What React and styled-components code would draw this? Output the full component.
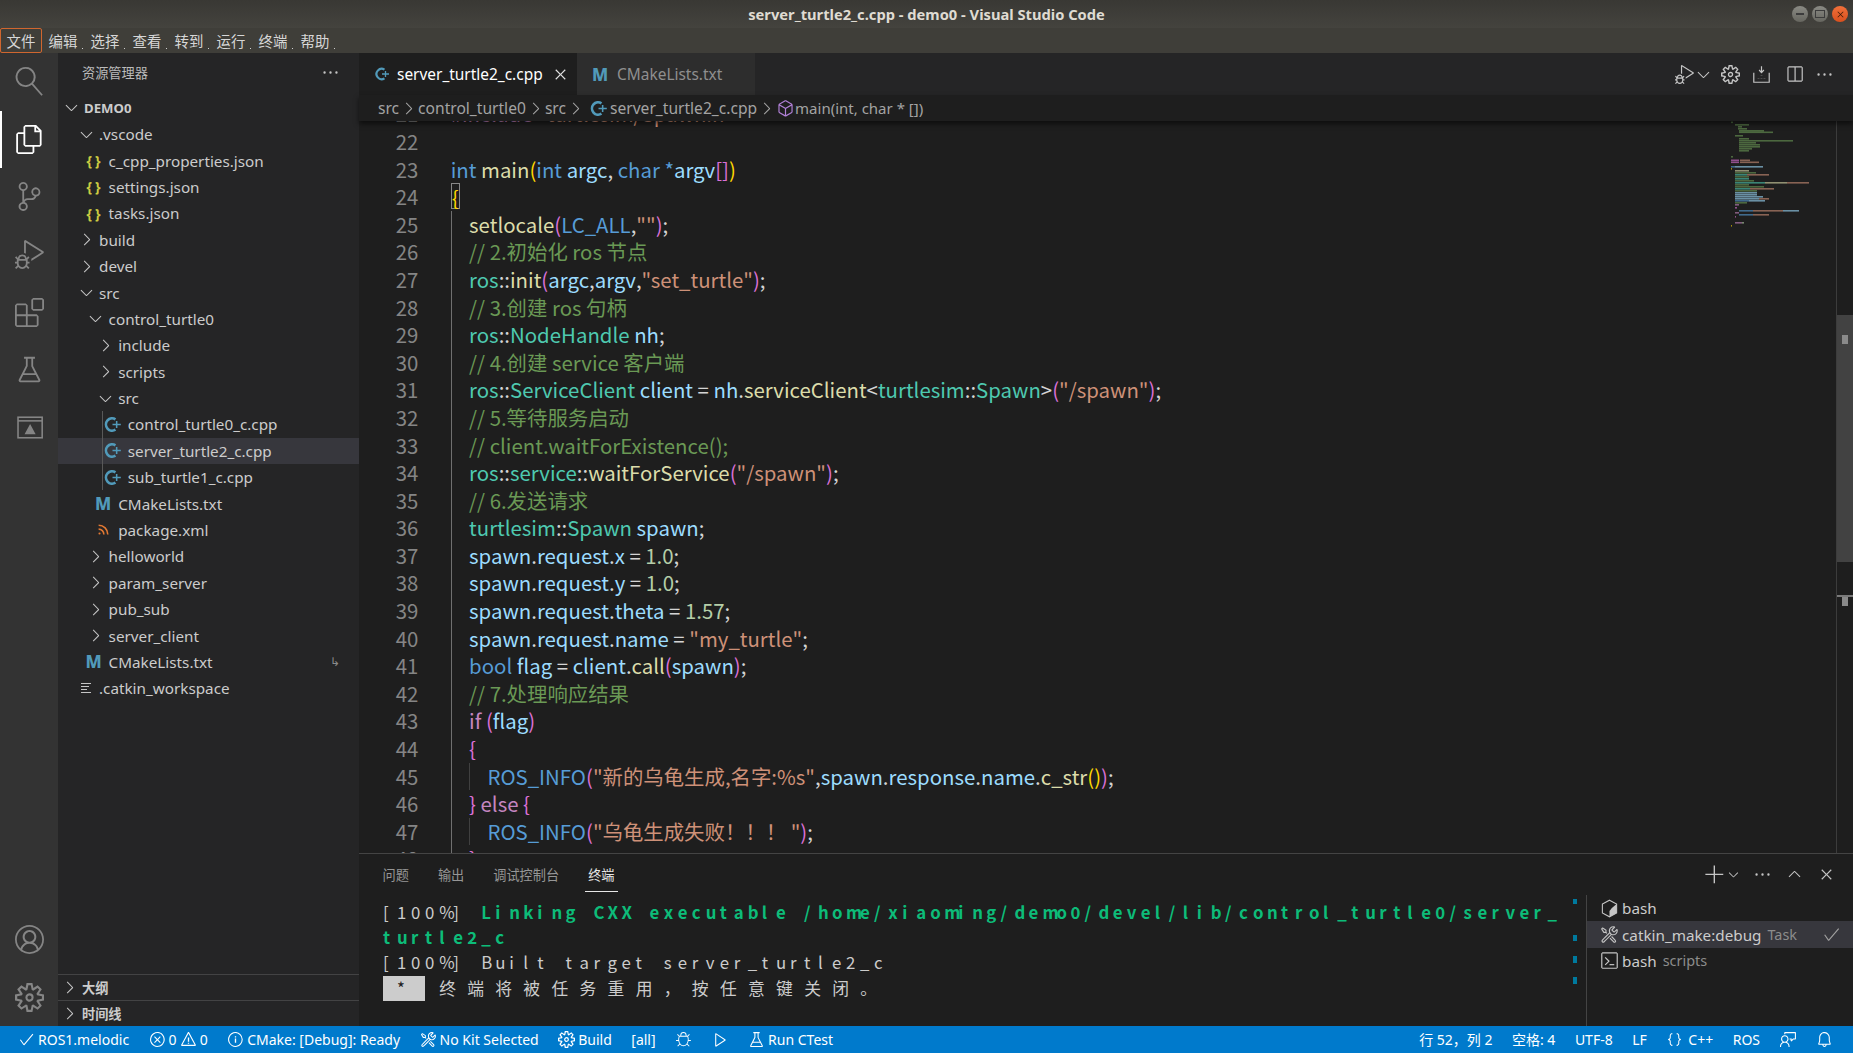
import styled, { createGlobalStyle } from 'styled-components';
import {
  VscSearch, VscFiles, VscSourceControl, VscDebugAlt, VscExtensions, VscBeaker, VscAccount,
  VscSettingsGear, VscEllipsis, VscChevronRight, VscChevronDown, VscChevronUp, VscClose,
  VscSplitHorizontal, VscSymbolMethod, VscTools, VscCheck, VscBell, VscFeedback, VscError,
  VscWarning, VscInfo, VscBug, VscPlay, VscAdd, VscTerminal, VscJson,
} from 'react-icons/vsc';

const UI = `'Noto Sans', 'Noto Sans CJK SC', sans-serif`;
const CODE = `'Noto Sans CJK SC', sans-serif`;

const Global = createGlobalStyle`
  html, body { margin: 0; height: 100%; overflow: hidden; background: #1e1e1e; }
  #root { height: 100%; }
`;

const Window = styled.div`
  height: 1053px;
  display: flex;
  flex-direction: column;
  font-family: ${UI};
  color: #cccccc;
`;

const TitleBar = styled.div`
  height: 28px;
  flex: none;
  box-sizing: border-box;
  padding-bottom: 1px;
  display: flex;
  align-items: center;
  justify-content: center;
  position: relative;
  background: linear-gradient(#393834, #44433e);
  color: #dfdbd2;
  font-size: 14.7px;
  font-weight: 700;
`;

const WinControls = styled.div`
  position: absolute;
  right: 5px;
  top: 6px;
  display: flex;
  gap: 4px;
`;

const WinButton = styled.div`
  width: 16px;
  height: 16px;
  border-radius: 50%;
  display: flex;
  align-items: center;
  justify-content: center;
  color: ${(p) => (p.$close ? '#3a1a08' : '#3c3c3c')};
  background: ${(p) =>
    p.$close ? 'linear-gradient(#f0703a, #d9501e)' : 'linear-gradient(#8a8a84, #66665f)'};
  svg { width: 11px; height: 11px; }
`;

const MinGlyph = styled.span`
  width: 8px;
  height: 2px;
  background: #3c3c3c;
`;

const MaxGlyph = styled.span`
  width: 8px;
  height: 6px;
  border: 1px solid #3c3c3c;
`;

const MenuBar = styled.div`
  height: 25px;
  flex: none;
  display: flex;
  background: #3f3e39;
  font-size: 14.4px;
`;

const MenuItem = styled.div`
  width: 42px;
  box-sizing: border-box;
  display: flex;
  align-items: center;
  justify-content: center;
  position: relative;
  color: #d6d6d6;
  border: 1px solid ${(p) => (p.$open ? '#d0662f' : 'transparent')};
  border-radius: 2px;
  &::after {
    content: '';
    display: ${(p) => (p.$open ? 'none' : 'block')};
    position: absolute;
    right: 0;
    bottom: 3px;
    width: 1px;
    height: 1px;
    background: #cfcfcf;
  }
`;

const Main = styled.div`
  flex: 1;
  min-height: 0;
  display: flex;
`;

const ActivityBar = styled.div`
  width: 58px;
  flex: none;
  display: flex;
  flex-direction: column;
  background: #333333;
`;

const ActivityGroup = styled.div`
  flex: ${(p) => (p.$grow ? 1 : 'none')};
  display: flex;
  flex-direction: column;
`;

const ActivityItem = styled.div`
  height: 57.6px;
  display: flex;
  align-items: center;
  justify-content: center;
  color: ${(p) => (p.$active ? '#ffffff' : '#858585')};
  border-left: 2px solid ${(p) => (p.$active ? '#ffffff' : 'transparent')};
  box-sizing: border-box;
  padding-right: 2px;
  svg { width: 29px; height: 29px; }
`;

const SideBar = styled.div`
  width: 301px;
  flex: none;
  display: flex;
  flex-direction: column;
  background: #252526;
  font-size: 15.25px;
`;

const SideHeader = styled.div`
  height: 41.6px;
  flex: none;
  box-sizing: border-box;
  padding: 0 19px 2px 24px;
  display: flex;
  align-items: center;
  justify-content: space-between;
  font-size: 13.2px;
  color: #bbbbbb;
  svg { width: 19px; height: 19px; color: #c5c5c5; }
`;

const Tree = styled.div`
  flex: 1;
`;

const Row = styled.div`
  height: 26.4px;
  display: flex;
  align-items: center;
  box-sizing: border-box;
  padding-left: ${(p) => 31.4 + p.$depth * 9.6 - (p.$wide ? 30 : 26)}px;
  background: ${(p) => (p.$selected ? '#37373d' : 'transparent')};
  color: #cccccc;
  white-space: nowrap;
`;

const RootRow = styled(Row)`
  font-size: 13.2px;
  font-weight: 700;
  color: #cccccc;
`;

const Slot = styled.span`
  width: ${(p) => (p.$wide ? 30 : 26)}px;
  flex: none;
  display: flex;
  align-items: center;
  justify-content: center;
  color: ${(p) => p.$color || '#c5c5c5'};
  svg { width: 19px; height: 19px; }
`;

const Trailing = styled.span`
  margin-left: auto;
  padding-right: 19px;
  font-size: 12px;
  color: #8a8a8a;
`;

const GuidedGroup = styled.div`
  position: relative;
  &::before {
    content: '';
    position: absolute;
    left: 43.5px;
    top: 0;
    bottom: 0;
    width: 1px;
    background: #585858;
    z-index: 1;
  }
`;

const BraceIcon = styled.span`
  font-size: 14px;
  font-weight: 700;
  color: #cbcb41;
  letter-spacing: 3px;
  margin-right: -3px;
`;

const MIcon = styled.span`
  font-size: 17px;
  font-weight: 800;
  color: #519aba;
`;

const LinesIcon = styled.span`
  display: flex;
  flex-direction: column;
  gap: 2px;
  width: 10px;
  i { display: block; height: 1px; background: #c5c5c5; }
  i:nth-child(2) { width: 8px; }
  i:nth-child(3) { width: 6px; }
`;

const SideSection = styled.div`
  height: 26px;
  flex: none;
  display: flex;
  align-items: center;
  box-sizing: border-box;
  border-top: 1px solid #434344;
  font-size: 13.2px;
  font-weight: 700;
  color: #cccccc;
  padding-left: 1.5px;
  gap: 3.5px;
  svg { width: 19px; height: 19px; color: #c5c5c5; }
`;

const Work = styled.div`
  flex: 1;
  min-width: 0;
  display: flex;
  flex-direction: column;
`;

const TabBar = styled.div`
  height: 42px;
  flex: none;
  display: flex;
  align-items: stretch;
  background: #252526;
`;

const Tab = styled.div`
  width: ${(p) => p.$w}px;
  box-sizing: border-box;
  display: flex;
  align-items: center;
  padding-left: 15px;
  font-size: 15.45px;
  background: ${(p) => (p.$active ? '#1e1e1e' : '#2d2d2d')};
  color: ${(p) => (p.$active ? '#ffffff' : '#8f8f8f')};
`;

const TabIcon = styled.span`
  width: ${(p) => p.$w}px;
  flex: none;
  display: flex;
  align-items: center;
`;

const TabClose = styled.span`
  margin-left: 8px;
  display: flex;
  svg { width: 19px; height: 19px; color: #e0e0e0; }
`;

const TabActions = styled.div`
  margin-left: auto;
  display: flex;
  align-items: center;
  padding-right: 19px;
  color: #c5c5c5;
  svg { width: 19px; height: 19px; }
`;

const ActionBtn = styled.span`
  display: flex;
  margin-left: ${(p) => p.$gap ?? 12}px;
`;

const Breadcrumb = styled.div`
  height: 26.4px;
  flex: none;
  display: flex;
  align-items: center;
  padding-left: 19px;
  font-size: 15.6px;
  color: #a3a3a3;
  background: #1e1e1e;
  position: relative;
  z-index: 2;
  box-shadow: 0 3px 5px rgba(0, 0, 0, 0.55);
  svg { width: 19px; height: 19px; }
`;

const CrumbSep = styled.span`
  display: flex;
  color: #a3a3a3;
`;

const CrumbIcon = styled.span`
  display: flex;
  margin: 0 ${(p) => p.$after}px 0 ${(p) => p.$before}px;
  color: ${(p) => p.$color};
`;

const CrumbSymbol = styled.span`
  font-size: 15px;
`;

const EditorBody = styled.div`
  flex: 1;
  min-height: 0;
  display: flex;
  background: #1e1e1e;
`;

const Code = styled.div`
  flex: 1;
  min-width: 0;
  overflow: hidden;
  font-family: ${CODE};
  font-size: 20.4px;
  color: #d4d4d4;
`;

const CodeScroll = styled.div`
  margin-top: -21px;
`;

const CodeLine = styled.div`
  height: 27.6px;
  line-height: 27.6px;
  display: flex;
  white-space: pre;
`;

const LineNo = styled.span`
  width: 59.3px;
  padding-right: 32.4px;
  flex: none;
  text-align: right;
  color: #858585;
`;

const Indent = styled.span`
  width: 18.4px;
  flex: none;
  box-sizing: border-box;
  border-left: 1px solid ${(p) => (p.$active ? '#707070' : '#404040')};
`;

const Tok = styled.span`
  color: ${(p) => p.$c};
`;

const MatchedBracket = styled(Tok)`
  box-sizing: border-box;
  height: 26px;
  line-height: 26px;
  border: 1px solid #888888;
`;

const MinimapBox = styled.div`
  width: 110px;
  flex: none;
  svg { display: block; margin-top: -1px; }
`;

const Ruler = styled.div`
  width: 17px;
  flex: none;
  box-sizing: border-box;
  position: relative;
  border-left: 1px solid #3c3c3c;
`;

const RulerSlider = styled.div`
  position: absolute;
  left: 0;
  right: 0;
  top: 194px;
  height: 247px;
  background: #424242;
`;

const RulerMark = styled.div`
  position: absolute;
  left: 5px;
  width: 6px;
  height: 9px;
  top: ${(p) => p.$top}px;
  background: #8a8a8a;
`;

const RulerLine = styled.div`
  position: absolute;
  left: 0;
  right: 0;
  top: 474px;
  height: 2px;
  background: #7a7a7a;
`;

const Panel = styled.div`
  height: 173px;
  flex: none;
  box-sizing: border-box;
  display: flex;
  flex-direction: column;
  border-top: 1px solid #444444;
  background: #1e1e1e;
`;

const PanelHeader = styled.div`
  height: 41px;
  flex: none;
  display: flex;
  align-items: stretch;
  padding-left: 20.5px;
  font-size: 13.2px;
`;

const PanelTab = styled.div`
  display: flex;
  align-items: center;
  padding: 0 3px 1px;
  margin-right: 23px;
  color: ${(p) => (p.$active ? '#e7e7e7' : '#969696')};
  position: relative;
  &::after {
    content: '';
    display: ${(p) => (p.$active ? 'block' : 'none')};
    position: absolute;
    left: 0;
    right: 0;
    bottom: 3px;
    height: 1px;
    background: #e7e7e7;
  }
`;

const PanelActions = styled.div`
  margin-left: auto;
  display: flex;
  align-items: center;
  padding-right: 17px;
  color: #c5c5c5;
  svg { width: 19px; height: 19px; }
`;

const PlusIcon = styled.span`
  display: flex;
  svg { width: 22px; height: 22px; }
`;

const SmallChevron = styled.span`
  display: flex;
  margin: 0 6px 0 0;
  svg { width: 15px; height: 15px; }
`;

const PanelBody = styled.div`
  flex: 1;
  min-height: 0;
  display: flex;
`;

const Terminal = styled.div`
  flex: 1;
  min-width: 0;
  box-sizing: border-box;
  padding: 5px 0 0 24px;
  position: relative;
  font-family: ${CODE};
  font-size: 16.8px;
  color: #cccccc;
`;

const TermRow = styled.div`
  height: 25.2px;
  line-height: 25.2px;
  display: flex;
  white-space: pre;
`;

const Cell = styled.span`
  width: ${(p) => (p.$wide ? 28.08 : 14.04)}px;
  flex: none;
  color: ${(p) => p.$c || 'inherit'};
  font-weight: ${(p) => (p.$bold ? 700 : 400)};
  background: ${(p) => p.$bg || 'transparent'};
`;

const Decoration = styled.div`
  position: absolute;
  right: 9px;
  width: 4px;
  height: ${(p) => p.$h}px;
  top: ${(p) => p.$top}px;
  background: #007a9e;
`;

const TermList = styled.div`
  width: 266px;
  flex: none;
  border-left: 1px solid #444444;
  font-size: 15.25px;
`;

const TermItem = styled.div`
  height: 26.4px;
  display: flex;
  align-items: center;
  padding-left: 13px;
  background: ${(p) => (p.$selected ? '#37373d' : 'transparent')};
  color: #cccccc;
  svg { width: 19px; height: 19px; flex: none; }
`;

const TermItemIcon = styled.span`
  display: flex;
  width: 22px;
  color: #c5c5c5;
`;

const TermHint = styled.span`
  margin-left: 6px;
  font-size: 14.4px;
  color: #8c8c8c;
`;

const TermCheck = styled.span`
  margin-left: auto;
  padding-right: 12px;
  display: flex;
  svg { width: 19px; height: 19px; color: #a0a0a0; }
`;

const StatusBar = styled.div`
  height: 27px;
  flex: none;
  box-sizing: border-box;
  display: flex;
  align-items: center;
  padding: 0 20px 1px 18px;
  gap: 19.5px;
  background: #007acc;
  color: #ffffff;
  font-size: 14px;
  svg { width: 17px; height: 17px; flex: none; }
`;

const StatusItem = styled.span`
  display: flex;
  align-items: center;
  gap: ${(p) => p.$gap ?? 3}px;
  white-space: nowrap;
  margin-left: ${(p) => (p.$push ? 'auto' : 0)};
`;

const CppIcon = ({ size = 16 }) => (
  <svg width={size} height={size} viewBox="0 0 16 16" fill="none" stroke="#519aba" strokeWidth="2.2">
    <path d="M10.5 3.6A5.2 5.2 0 1 0 10.5 12.4" />
    <path d="M8 8h7M11.5 5v6" strokeWidth="1.3" />
  </svg>
);

const RemoteIcon = () => (
  <svg viewBox="0 0 24 24" fill="none" stroke="currentColor" strokeWidth="1.3">
    <rect x="2.5" y="3.5" width="20" height="17" />
    <path d="M2.5 6.5h20" />
    <path d="M12.5 10.5l3.5 6.5h-7z" fill="currentColor" />
  </svg>
);

const InstallIcon = () => (
  <svg viewBox="0 0 16 16" fill="none" stroke="currentColor" strokeWidth="1">
    <path d="M1.5 6.5v8h13v-8" />
    <path d="M8 1v5M6 4.2L8 6.5l2-2.3" />
    <path d="M8 8.5v.1M5.5 11v.1M8 11v.1M10.5 11v.1M8 13v.1" strokeWidth="1.6" />
  </svg>
);

const CubeIcon = () => (
  <svg viewBox="0 0 16 16" fill="none" stroke="currentColor" strokeWidth="0.9">
    <path d="M8 1l6 3.2v7.6L8 15l-6-3.2V4.2z" />
    <path d="M10 7.5l4-3.3v7.6L8 15V10z" fill="currentColor" stroke="none" />
  </svg>
);

const menu = ['文件', '编辑', '选择', '查看', '转到', '运行', '终端', '帮助'];

const K = '#569cd6';
const F = '#dcdcaa';
const V = '#9cdcfe';
const Y = '#4ec9b0';
const C = '#6a9955';
const S = '#ce9178';
const P = '#d4d4d4';
const N = '#b5cea8';
const M = '#c586c0';
const G = '#ffd700';
const O = '#da70d6';

const spawnField = (name, value) => [[V, 'spawn'], [P, '.'], [V, 'request'], [P, '.'], [V, name], [P, ' = '], [N, value], [P, ';']];

const code = [
  [21, 0, [[M, '#include'], [P, ' '], [S, '"turtlesim/Spawn.h"']]],
  [22, 0, []],
  [23, 0, [[K, 'int'], [P, ' '], [F, 'main'], [G, '('], [K, 'int'], [P, ' '], [V, 'argc'], [P, ', '], [K, 'char'], [P, ' '], [K, '*'], [V, 'argv'], [O, '[]'], [G, ')']]],
  [24, 0, [['bracket', '{']]],
  [25, 1, [[F, 'setlocale'], [O, '('], [K, 'LC_ALL'], [P, ','], [S, '""'], [O, ')'], [P, ';']]],
  [26, 1, [[C, '// 2.初始化 ros 节点']]],
  [27, 1, [[Y, 'ros'], [P, '::'], [F, 'init'], [O, '('], [V, 'argc'], [P, ','], [V, 'argv'], [P, ','], [S, '"set_turtle"'], [O, ')'], [P, ';']]],
  [28, 1, [[C, '// 3.创建 ros 句柄']]],
  [29, 1, [[Y, 'ros'], [P, '::'], [Y, 'NodeHandle'], [P, ' '], [V, 'nh'], [P, ';']]],
  [30, 1, [[C, '// 4.创建 service 客户端']]],
  [31, 1, [[Y, 'ros'], [P, '::'], [Y, 'ServiceClient'], [P, ' '], [V, 'client'], [P, ' = '], [V, 'nh'], [P, '.'], [F, 'serviceClient'], [P, '<'], [Y, 'turtlesim'], [P, '::'], [Y, 'Spawn'], [P, '>'], [O, '('], [S, '"/spawn"'], [O, ')'], [P, ';']]],
  [32, 1, [[C, '// 5.等待服务启动']]],
  [33, 1, [[C, '// client.waitForExistence();']]],
  [34, 1, [[Y, 'ros'], [P, '::'], [Y, 'service'], [P, '::'], [F, 'waitForService'], [O, '('], [S, '"/spawn"'], [O, ')'], [P, ';']]],
  [35, 1, [[C, '// 6.发送请求']]],
  [36, 1, [[Y, 'turtlesim'], [P, '::'], [Y, 'Spawn'], [P, ' '], [V, 'spawn'], [P, ';']]],
  [37, 1, spawnField('x', '1.0')],
  [38, 1, spawnField('y', '1.0')],
  [39, 1, spawnField('theta', '1.57')],
  [40, 1, [[V, 'spawn'], [P, '.'], [V, 'request'], [P, '.'], [V, 'name'], [P, ' = '], [S, '"my_turtle"'], [P, ';']]],
  [41, 1, [[K, 'bool'], [P, ' '], [V, 'flag'], [P, ' = '], [V, 'client'], [P, '.'], [F, 'call'], [O, '('], [V, 'spawn'], [O, ')'], [P, ';']]],
  [42, 1, [[C, '// 7.处理响应结果']]],
  [43, 1, [[M, 'if'], [P, ' '], [O, '('], [V, 'flag'], [O, ')']]],
  [44, 1, [[O, '{']]],
  [45, 2, [[K, 'ROS_INFO'], [O, '('], [S, '"新的乌龟生成,名字:%s"'], [P, ','], [V, 'spawn'], [P, '.'], [V, 'response'], [P, '.'], [V, 'name'], [P, '.'], [F, 'c_str'], [G, '()'], [O, ')'], [P, ';']]],
  [46, 1, [[O, '}'], [P, ' '], [M, 'else'], [P, ' '], [O, '{']]],
  [47, 2, [[K, 'ROS_INFO'], [O, '('], [S, '"乌龟生成失败！！！ "'], [O, ')'], [P, ';']]],
  [48, 1, [[O, '}']]],
];

const minimap = [
  [12, 11.5, 2, C], [16, 14, 14, C], [19, 16, 4, C], [19, 18, 9, C], [20, 20, 25, C], [20, 21.5, 34, C],
  [16, 25, 8, C], [20, 28, 10, C], [20, 30, 54, C], [20, 32, 17, C], [20, 34, 21, C], [20, 36, 21, C], [20, 38, 13, C], [20, 40, 10, C],
  [12, 46, 2, C], [12, 49.5, 8, O], [21, 49.5, 10, S], [12, 51.5, 8, O], [21, 51.5, 19, S],
  [12, 56, 4, K], [16, 56, 28, V], [12, 58, 1, G],
  [16, 60, 14, F], [16, 62, 21, C], [16, 64, 12, Y], [28, 64, 22, S], [16, 66, 14, C], [16, 68, 14, Y], [16, 70, 19, C],
  [16, 72, 30, Y], [46, 72, 22, F], [68, 72, 22, S], [16, 74, 14, C], [16, 76, 29, C], [16, 78, 15, Y], [31, 78, 24, S],
  [16, 80, 22, C], [16, 82, 22, V], [16, 84, 22, V], [16, 86, 28, V], [16, 88, 24, V], [40, 88, 10, S], [16, 90, 14, K], [30, 90, 16, V],
  [16, 92, 12, C], [16, 94, 4, M], [16, 97, 2, O], [20, 100, 14, K], [34, 100, 30, S], [64, 100, 16, V], [16, 102, 4, M], [20, 104, 14, K], [34, 104, 16, S],
  [16, 106, 1, O], [16, 112, 7, M], [23, 112, 2, N], [12, 115, 1, G],
];

const TermLine = ({ text, color, bold }) => (
  <TermRow>
    {[...text].map((ch, i) => (
      <Cell key={i} $c={color} $bold={bold}>{ch}</Cell>
    ))}
  </TermRow>
);

const Prefix = [...'[100%] '];

export default function App() {
  return (
    <Window>
      <Global />
      <TitleBar>
        server_turtle2_c.cpp - demo0 - Visual Studio Code
        <WinControls>
          <WinButton><MinGlyph /></WinButton>
          <WinButton><MaxGlyph /></WinButton>
          <WinButton $close><VscClose /></WinButton>
        </WinControls>
      </TitleBar>
      <MenuBar>
        {menu.map((m, i) => (
          <MenuItem key={m} $open={i === 0}>{m}</MenuItem>
        ))}
      </MenuBar>
      <Main>
        <ActivityBar>
          <ActivityGroup $grow>
            <ActivityItem><VscSearch style={{ transform: 'scaleX(-1)' }} /></ActivityItem>
            <ActivityItem $active><VscFiles /></ActivityItem>
            <ActivityItem><VscSourceControl /></ActivityItem>
            <ActivityItem><VscDebugAlt /></ActivityItem>
            <ActivityItem><VscExtensions /></ActivityItem>
            <ActivityItem><VscBeaker /></ActivityItem>
            <ActivityItem><RemoteIcon /></ActivityItem>
          </ActivityGroup>
          <ActivityGroup>
            <ActivityItem><VscAccount /></ActivityItem>
            <ActivityItem><VscSettingsGear /></ActivityItem>
          </ActivityGroup>
        </ActivityBar>
        <SideBar>
          <SideHeader>
            资源管理器
            <VscEllipsis />
          </SideHeader>
          <Tree>
            <RootRow $depth={-0.77}><Slot><VscChevronDown /></Slot>DEMO0</RootRow>
            <Row $depth={1}><Slot><VscChevronDown /></Slot>.vscode</Row>
            <Row $depth={2} $wide><Slot $wide><BraceIcon>{'{}'}</BraceIcon></Slot>c_cpp_properties.json</Row>
            <Row $depth={2} $wide><Slot $wide><BraceIcon>{'{}'}</BraceIcon></Slot>settings.json</Row>
            <Row $depth={2} $wide><Slot $wide><BraceIcon>{'{}'}</BraceIcon></Slot>tasks.json</Row>
            <Row $depth={1}><Slot><VscChevronRight /></Slot>build</Row>
            <Row $depth={1}><Slot><VscChevronRight /></Slot>devel</Row>
            <Row $depth={1}><Slot><VscChevronDown /></Slot>src</Row>
            <Row $depth={2}><Slot><VscChevronDown /></Slot>control_turtle0</Row>
            <Row $depth={3}><Slot><VscChevronRight /></Slot>include</Row>
            <Row $depth={3}><Slot><VscChevronRight /></Slot>scripts</Row>
            <Row $depth={3}><Slot><VscChevronDown /></Slot>src</Row>
            <GuidedGroup>
              <Row $depth={4} $wide><Slot $wide><CppIcon /></Slot>control_turtle0_c.cpp</Row>
              <Row $depth={4} $wide $selected><Slot $wide><CppIcon /></Slot>server_turtle2_c.cpp</Row>
              <Row $depth={4} $wide><Slot $wide><CppIcon /></Slot>sub_turtle1_c.cpp</Row>
            </GuidedGroup>
            <Row $depth={3} $wide><Slot $wide><MIcon>M</MIcon></Slot>CMakeLists.txt</Row>
            <Row $depth={3} $wide>
              <Slot $wide $color="#e37933">
                <svg viewBox="0 0 16 16" fill="none" stroke="currentColor" strokeWidth="1.8" style={{ width: 14, height: 14 }}>
                  <path d="M3 2.5A10.5 10.5 0 0 1 13.5 13M3 7a6 6 0 0 1 6 6" />
                  <circle cx="4" cy="12" r="1.2" fill="currentColor" stroke="none" />
                </svg>
              </Slot>
              package.xml
            </Row>
            <Row $depth={2}><Slot><VscChevronRight /></Slot>helloworld</Row>
            <Row $depth={2}><Slot><VscChevronRight /></Slot>param_server</Row>
            <Row $depth={2}><Slot><VscChevronRight /></Slot>pub_sub</Row>
            <Row $depth={2}><Slot><VscChevronRight /></Slot>server_client</Row>
            <Row $depth={2} $wide><Slot $wide><MIcon>M</MIcon></Slot>CMakeLists.txt<Trailing>↳</Trailing></Row>
            <Row $depth={1}><Slot><LinesIcon><i /><i /><i /><i /></LinesIcon></Slot>.catkin_workspace</Row>
          </Tree>
          <SideSection><VscChevronRight />大纲</SideSection>
          <SideSection><VscChevronRight />时间线</SideSection>
        </SideBar>
        <Work>
          <TabBar>
            <Tab $active $w={218}>
              <TabIcon $w={23}><CppIcon /></TabIcon>
              server_turtle2_c.cpp
              <TabClose><VscClose /></TabClose>
            </Tab>
            <Tab $w={178}>
              <TabIcon $w={21}><MIcon>M</MIcon></TabIcon>
              &nbsp;CMakeLists.txt
            </Tab>
            <TabActions>
              <ActionBtn><VscDebugAlt /></ActionBtn>
              <ActionBtn $gap={0}><VscChevronDown /></ActionBtn>
              <ActionBtn $gap={8.5}><VscSettingsGear /></ActionBtn>
              <ActionBtn><InstallIcon /></ActionBtn>
              <ActionBtn $gap={14}><VscSplitHorizontal /></ActionBtn>
              <ActionBtn $gap={11}><VscEllipsis /></ActionBtn>
            </TabActions>
          </TabBar>
          <Breadcrumb>
            src<CrumbSep><VscChevronRight /></CrumbSep>
            control_turtle0<CrumbSep><VscChevronRight /></CrumbSep>
            src<CrumbSep><VscChevronRight /></CrumbSep>
            <CrumbIcon $before={4} $after={2}><CppIcon /></CrumbIcon>
            server_turtle2_c.cpp<CrumbSep><VscChevronRight /></CrumbSep>
            <CrumbIcon $before={0} $after={0} $color="#b180d7"><VscSymbolMethod /></CrumbIcon>
            <CrumbSymbol>main(int, char * [])</CrumbSymbol>
          </Breadcrumb>
          <EditorBody>
            <Code>
              <CodeScroll>
                {code.map(([n, depth, toks]) => (
                  <CodeLine key={n}>
                    <LineNo>{n}</LineNo>
                    {Array.from({ length: depth }, (_, i) => (
                      <Indent key={i} $active={i === 0} />
                    ))}
                    {toks.map(([c, text], i) =>
                      c === 'bracket' ? (
                        <MatchedBracket key={i} $c={G}>{text}</MatchedBracket>
                      ) : (
                        <Tok key={i} $c={c}>{text}</Tok>
                      )
                    )}
                  </CodeLine>
                ))}
              </CodeScroll>
            </Code>
            <MinimapBox>
              <svg width="110" height="125" viewBox="7 10 110 125">
                {minimap.map(([x, y, w, c], i) => (
                  <rect key={i} x={x} y={y} width={w} height="1.6" fill={c} opacity="0.6" />
                ))}
              </svg>
            </MinimapBox>
            <Ruler>
              <RulerSlider />
              <RulerMark $top={214} />
              <RulerLine />
              <RulerMark $top={476} />
            </Ruler>
          </EditorBody>
          <Panel>
            <PanelHeader>
              <PanelTab>问题</PanelTab>
              <PanelTab>输出</PanelTab>
              <PanelTab>调试控制台</PanelTab>
              <PanelTab $active>终端</PanelTab>
              <PanelActions>
                <PlusIcon><VscAdd /></PlusIcon>
                <SmallChevron><VscChevronDown /></SmallChevron>
                <ActionBtn $gap={6}><VscEllipsis /></ActionBtn>
                <ActionBtn $gap={13}><VscChevronUp /></ActionBtn>
                <ActionBtn $gap={13}><VscClose /></ActionBtn>
              </PanelActions>
            </PanelHeader>
            <PanelBody>
              <Terminal>
                <TermRow>
                  {Prefix.map((ch, i) => <Cell key={i}>{ch}</Cell>)}
                  {[...'Linking CXX executable /home/xiaoming/demo0/devel/lib/control_turtle0/server_'].map((ch, i) => (
                    <Cell key={i} $c="#0dbc79" $bold>{ch}</Cell>
                  ))}
                </TermRow>
                <TermLine text="turtle2_c" color="#0dbc79" bold />
                <TermLine text="[100%] Built target server_turtle2_c" />
                <TermRow>
                  {[...' * '].map((ch, i) => <Cell key={i} $bg="#cccccc" $c="#1e1e1e">{ch}</Cell>)}
                  {[...' 终端将被任务重用，按任意键关闭。'].map((ch, i) => (
                    <Cell key={i} $wide={ch !== ' '}>{ch}</Cell>
                  ))}
                </TermRow>
                <Decoration $top={4} $h={5} />
                <Decoration $top={40} $h={6} />
                <Decoration $top={61} $h={7} />
                <Decoration $top={82} $h={7} />
              </Terminal>
              <TermList>
                <TermItem>
                  <TermItemIcon><CubeIcon /></TermItemIcon>bash
                </TermItem>
                <TermItem $selected>
                  <TermItemIcon><VscTools /></TermItemIcon>catkin_make:debug
                  <TermHint>Task</TermHint>
                  <TermCheck><VscCheck /></TermCheck>
                </TermItem>
                <TermItem>
                  <TermItemIcon><VscTerminal /></TermItemIcon>bash
                  <TermHint>scripts</TermHint>
                </TermItem>
              </TermList>
            </PanelBody>
          </Panel>
        </Work>
      </Main>
      <StatusBar>
        <StatusItem><VscCheck />ROS1.melodic</StatusItem>
        <StatusItem><VscError />0<VscWarning />0</StatusItem>
        <StatusItem><VscInfo />CMake: [Debug]: Ready</StatusItem>
        <StatusItem><VscTools />No Kit Selected</StatusItem>
        <StatusItem><VscSettingsGear />Build</StatusItem>
        <StatusItem>[all]</StatusItem>
        <StatusItem><VscBug /></StatusItem>
        <StatusItem><VscPlay /></StatusItem>
        <StatusItem><VscBeaker />Run CTest</StatusItem>
        <StatusItem $push>行 52，列 2</StatusItem>
        <StatusItem>空格: 4</StatusItem>
        <StatusItem>UTF-8</StatusItem>
        <StatusItem>LF</StatusItem>
        <StatusItem $gap={5}><VscJson />C++</StatusItem>
        <StatusItem>ROS</StatusItem>
        <StatusItem><VscFeedback /></StatusItem>
        <StatusItem><VscBell /></StatusItem>
      </StatusBar>
    </Window>
  );
}
